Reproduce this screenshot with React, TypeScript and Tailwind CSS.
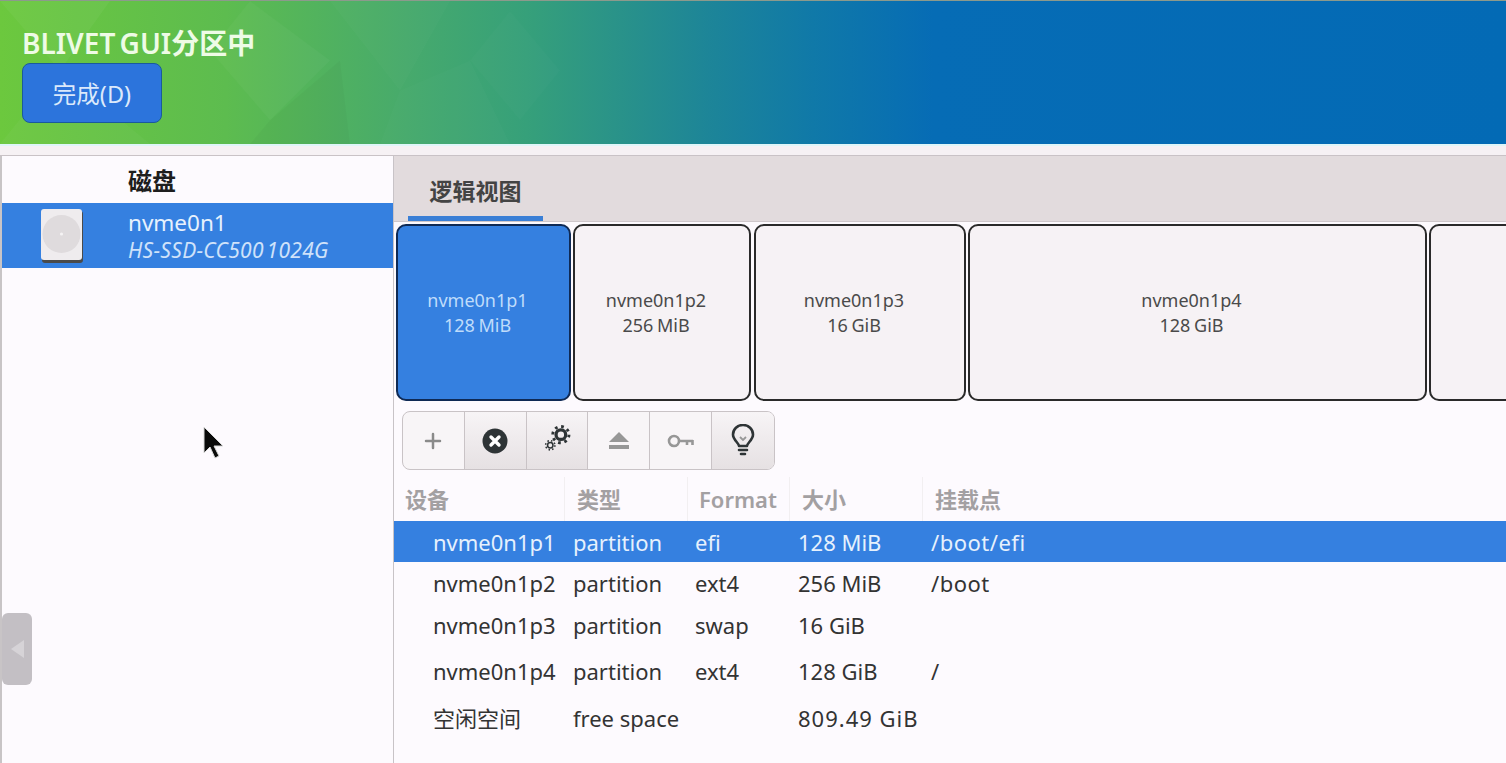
import React from 'react'
import { Plus } from 'lucide-react'

const FONT = "font-['Noto_Sans','Noto_Sans_CJK_SC',sans-serif]"

const partitions = [
  { name: 'nvme0n1p1', size: '128 MiB', width: 'w-[175px]', selected: true },
  { name: 'nvme0n1p2', size: '256 MiB', width: 'w-[178px]' },
  { name: 'nvme0n1p3', size: '16 GiB', width: 'w-[212px] ml-[1px]' },
  { name: 'nvme0n1p4', size: '128 GiB', width: 'w-[459px]' },
  { name: '', size: '', width: 'w-[120px]' },
]

const rows = [
  { dev: 'nvme0n1p1', type: 'partition', fmt: 'efi', size: '128 MiB', mount: '/boot/efi', h: 'h-[41px] pt-[2px]', selected: true },
  { dev: 'nvme0n1p2', type: 'partition', fmt: 'ext4', size: '256 MiB', mount: '/boot', h: 'h-[42px]' },
  { dev: 'nvme0n1p3', type: 'partition', fmt: 'swap', size: '16 GiB', mount: '', h: 'h-[43px]' },
  { dev: 'nvme0n1p4', type: 'partition', fmt: 'ext4', size: '128 GiB', mount: '/', h: 'h-[47px] pt-[2px]' },
  { dev: '空闲空间', type: 'free space', fmt: '', size: '809.49 GiB', mount: '', h: 'h-[47px] pt-[2px]' },
]

function HeaderArt() {
  return (
    <svg className="absolute inset-0 w-full h-full" viewBox="0 0 1506 144" preserveAspectRatio="none">
      <polygon points="0,0 110,0 60,70" fill="#ffffff" opacity="0.04" />
      <polygon points="60,70 0,144 150,144" fill="#ffffff" opacity="0.03" />
      <polygon points="250,0 330,60 270,120 210,50" fill="#ffffff" opacity="0.03" />
      <polygon points="270,120 340,60 350,144 250,144" fill="#000000" opacity="0.025" />
      <polygon points="330,0 450,0 400,90" fill="#ffffff" opacity="0.02" />
      <polygon points="400,90 470,60 510,144 380,144" fill="#ffffff" opacity="0.015" />
      <polygon points="510,10 560,70 520,120 470,60" fill="#ffffff" opacity="0.015" />
    </svg>
  )
}

function DiskIcon() {
  return (
    <svg width="46" height="56" viewBox="0 0 46 56">
      <rect x="3" y="3" width="41" height="52" rx="3" fill="#4a4a4a" />
      <rect x="2" y="1" width="41" height="51" rx="3" fill="#efecee" />
      <circle cx="22.5" cy="26" r="19" fill="#dfdbdd" />
      <circle cx="22.5" cy="26" r="1.6" fill="#f5f3f4" />
    </svg>
  )
}

function CloseCircle() {
  return (
    <svg width="26" height="26" viewBox="0 0 26 26">
      <circle cx="13" cy="13" r="12.5" fill="#2e3436" />
      <path d="M9 9l8 8M17 9l-8 8" stroke="#fff" strokeWidth="3.4" strokeLinecap="round" />
    </svg>
  )
}

function Gears() {
  return (
    <svg width="27" height="27" viewBox="0 0 28 28" fill="none" stroke="#2e3436" className="-mt-[4px]">
      <circle cx="17.5" cy="10" r="5" strokeWidth="3.4" />
      <circle cx="17.5" cy="10" r="8.4" strokeWidth="3" strokeDasharray="2.8 3.8" />
      <circle cx="6.5" cy="21" r="2.8" strokeWidth="1.6" />
      <circle cx="6.5" cy="21" r="4.8" strokeWidth="1.6" strokeDasharray="1.6 2.2" />
    </svg>
  )
}

function Eject() {
  return (
    <svg width="20" height="18" viewBox="0 0 20 18" fill="#979797">
      <polygon points="10,0 20,10 0,10" />
      <rect x="0" y="13" width="20" height="4" />
    </svg>
  )
}

function KeyIcon() {
  return (
    <svg width="28" height="14" viewBox="0 0 28 14" fill="none" stroke="#979797" strokeWidth="2.6">
      <circle cx="7" cy="7" r="5" />
      <path d="M12 7h14M20 7v4M25.5 6v5" />
    </svg>
  )
}

function Bulb() {
  return (
    <svg width="24" height="32" viewBox="0 0 24 32" fill="none" stroke="#2e3436" strokeWidth="2.6" className="-mt-[2px]">
      <path d="M8 22c0-3-6-6-6-11.500a10 9.500 0 0 1 20 0C22 16 16 19 16 22z" strokeLinejoin="round" />
      <path d="M9 13l3 3 3-3" stroke="#979797" strokeWidth="1.800" />
      <path d="M8 26h8M10 30h4" strokeLinecap="round" />
    </svg>
  )
}

function Cursor() {
  return (
    <svg className="absolute left-[202px] top-[426px]" width="24" height="36" viewBox="0 0 24 36">
      <path d="M2 1v26l6-6 5 11 4-2-5-10h9z" fill="#0a0a0a" stroke="#d8d8d8" strokeWidth="1" />
    </svg>
  )
}

const toolBtn = 'w-[62px] h-full flex items-center justify-center border-r border-[#c9c3c6] last:border-r-0'

export default function App() {
  return (
    <div className={`${FONT} relative w-[1506px] h-[763px] overflow-hidden bg-[#fdfafe] text-[#2e3436]`}>
      <header className="relative h-[146px] bg-[linear-gradient(90deg,#6cc83e_0%,#5dbc4f_15%,#47aa6c_27%,#36a07a_35%,#1d8598_47%,#1079a8_54%,#066cb5_62%,#036ab5_100%)] border-t border-[#8c9a8c] border-b-2 border-b-[#dff5f8]">
        <HeaderArt />
        <div className="relative pl-[22px] pt-[23px]">
          <div className="text-[28px] leading-[38px] font-semibold text-[#eefbe6] [word-spacing:-3px] whitespace-nowrap">BLIVET GUI分区中</div>
          <button className="mt-[1px] w-[140px] h-[60px] rounded-[8px] bg-[#2c74dc] border border-[#1a5a9c] text-[#dbe9fb] text-[23.500px] pt-[3px]">完成(D)</button>
        </div>
      </header>

      <div className="h-[9px] bg-[#f6f1f4]" />

      <div className="flex h-[608px] border-t border-[#c9c2c6]">
        {/* disk list */}
        <aside className="w-[394px] shrink-0 border-l-2 border-l-[#c8c4c6] border-r border-r-[#c8c3c7] bg-[#fdfafe]">
          <div className="h-[47px] pl-[126px] pt-[7px] text-[24px] leading-[36px] font-bold text-[#1e1e1e]">磁盘</div>
          <div className="h-[65px] bg-[#3580e0] flex items-center text-[#e6f1fd]">
            <div className="w-[126px] pl-[37px] pt-[1px]"><DiskIcon /></div>
            <div className="-mt-[1px]">
              <div className="text-[22.500px] leading-[30px]">nvme0n1</div>
              <div className="text-[21px] leading-[24px] italic text-[#cfe2fa] [word-spacing:-3px] tracking-[0.3px] whitespace-nowrap">HS-SSD-CC500 1024G</div>
            </div>
          </div>
        </aside>

        <main className="flex-1 min-w-0">
          {/* tab bar */}
          <div className="h-[66px] bg-[#e2dbdd] border-b border-[#cfc8cb] pl-[14px]">
            <div className="w-[135px] h-[65px] border-b-[5px] border-[#3a7fd6] text-center pt-[17px] text-[23px] leading-[36px] font-bold text-[#444]">逻辑视图</div>
          </div>

          {/* partition blocks */}
          <div className="flex gap-[2px] pl-[2px] pt-[2px]">
            {partitions.map((p, i) => (
              <div
                key={i}
                className={`${p.width} h-[177px] shrink-0 rounded-[10px] border-2 pr-[12px] flex flex-col items-center justify-center text-[18px] leading-[25px] [word-spacing:-1px] ${
                  p.selected ? 'bg-[#3580e0] border-[#0f2a55] text-[#bfdcfb]' : 'bg-[#f6f2f5] border-[#2a2a2a] text-[#4a4a4a]'
                }`}
              >
                <div>{p.name}</div>
                <div>{p.size}</div>
              </div>
            ))}
          </div>

          {/* toolbar */}
          <div className="ml-[8px] mt-[10px] w-[373px] h-[59px] flex rounded-[8px] border border-[#c9c3c6] overflow-hidden bg-[#f8f5f7]">
            <div className={toolBtn}><Plus size={24} strokeWidth={2.5} className="text-[#8a8a8a]" /></div>
            <div className={`${toolBtn} bg-[linear-gradient(180deg,#f7f4f6,#e6e1e3)]`}><CloseCircle /></div>
            <div className={`${toolBtn} bg-[linear-gradient(180deg,#f7f4f6,#e6e1e3)]`}><Gears /></div>
            <div className={toolBtn}><Eject /></div>
            <div className={toolBtn}><KeyIcon /></div>
            <div className={`${toolBtn} bg-[linear-gradient(180deg,#f7f4f6,#e6e1e3)]`}><Bulb /></div>
          </div>

          {/* table */}
          <div className="mt-[7px] flex h-[44px] items-center text-[22px] font-semibold text-[#a3a0a2]">
            <div className="w-[171px] pl-[11px] border-r border-[#f2eff1] h-full flex items-center">设备</div>
            <div className="w-[123px] pl-[12px] border-r border-[#f2eff1] h-full flex items-center">类型</div>
            <div className="w-[102px] pl-[11px] border-r border-[#f2eff1] h-full flex items-center">Format</div>
            <div className="w-[133px] pl-[12px] border-r border-[#f2eff1] h-full flex items-center">大小</div>
            <div className="pl-[12px] h-full flex items-center">挂载点</div>
          </div>
          {rows.map((r) => (
            <div key={r.dev} className={`${r.h} flex items-center text-[22px] ${r.selected ? 'bg-[#3580e0] text-[#e6f1fd]' : 'text-[#333]'}`}>
              <div className="w-[179px] pl-[39px] whitespace-nowrap">{r.dev}</div>
              <div className="w-[122px] whitespace-nowrap">{r.type}</div>
              <div className="w-[103px]">{r.fmt}</div>
              <div className={`w-[133px] whitespace-nowrap ${r.size === '809.49 GiB' ? 'tracking-[1px]' : ''}`}>{r.size}</div>
              <div className="tracking-[0.5px]">{r.mount}</div>
            </div>
          ))}
        </main>
      </div>

      {/* sidebar toggle */}
      <div className="absolute left-[2px] top-[613px] w-[30px] h-[72px] rounded-[6px] bg-[#c3bfc4] flex items-center justify-center">
        <svg width="16" height="20" viewBox="0 0 16 20"><polygon points="15,1 15,19 2,10" fill="#d6d3d7" /></svg>
      </div>
      <Cursor />
    </div>
  )
}
